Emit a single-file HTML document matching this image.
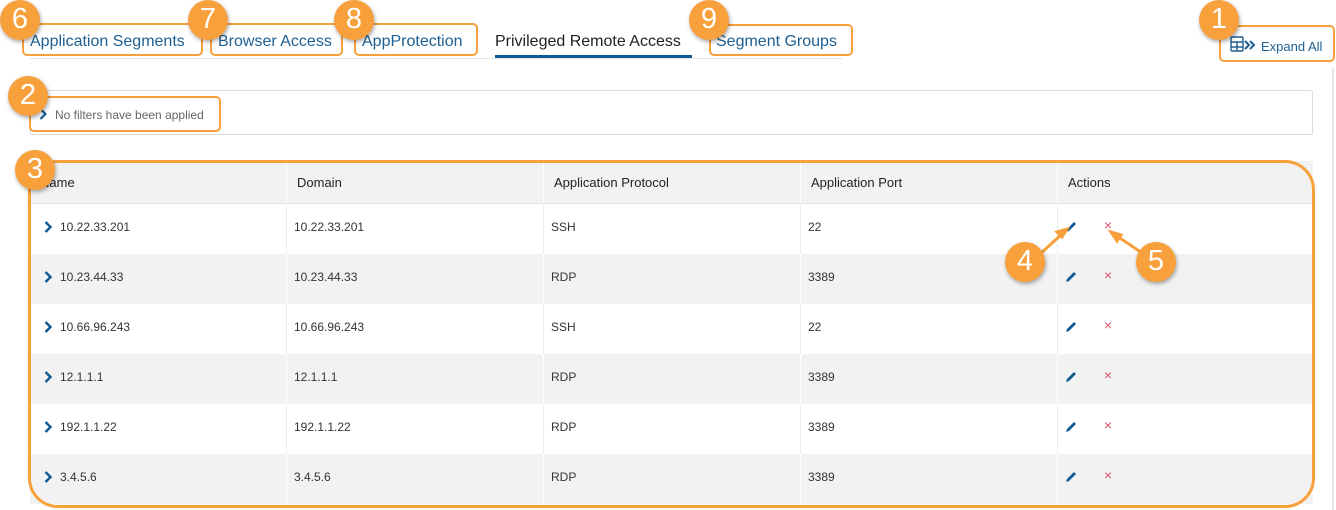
<!DOCTYPE html>
<html><head><style>
*{box-sizing:border-box;margin:0;padding:0}
body{width:1336px;height:510px;background:#fff;font-family:"Liberation Sans",sans-serif;position:relative;overflow:hidden}
.a{position:absolute}
.tab{position:absolute;top:33px;font-size:16px;color:#1d5f92;white-space:nowrap}
.ob{position:absolute;border:2.5px solid #f7a03c;border-radius:5px}
.c{position:absolute;width:40px;height:40px;border-radius:50%;background:#f7a03c;color:#fff;font-size:29px;text-align:center;line-height:39px;box-shadow:1px 2px 4px rgba(0,0,0,.35);z-index:5}
.row{position:absolute;left:30px;width:1283px;height:50px;font-size:12px;color:#333}
.cell{position:absolute;top:0;height:100%;line-height:46px}
.g{background:#f2f2f2}
.sep{position:absolute;top:0;width:1px;height:100%;background:#fff}
.row:not(.g):not(.hd) .sep{background:#ececec}
</style></head><body>
<div class="a" style="left:30px;top:58px;width:812px;height:1px;background:#e2e2e2"></div>
<div class="a" style="left:1332px;top:68px;width:2px;height:442px;background:#e6e6e6"></div>
<div class="tab" style="left:30px">Application Segments</div>
<div class="tab" style="left:218px">Browser Access</div>
<div class="tab" style="left:362px">AppProtection</div>
<div class="tab" style="left:495px;color:#222">Privileged Remote Access</div>
<div class="a" style="left:495px;top:55px;width:197px;height:3px;background:#0f5a93"></div>
<div class="tab" style="left:716px">Segment Groups</div>
<div class="ob" style="left:22px;top:23px;width:181px;height:33px"></div>
<div class="ob" style="left:210px;top:23px;width:133px;height:33px"></div>
<div class="ob" style="left:354px;top:23px;width:124px;height:33px"></div>
<div class="ob" style="left:709px;top:24px;width:144px;height:32px"></div>
<div class="ob" style="left:1219px;top:25px;width:116px;height:37px"></div>
<svg class="a" style="left:1230px;top:36px" width="28" height="18" viewBox="0 0 28 18" fill="none" stroke="#1d5f92" stroke-width="1.4"><rect x="1" y="1" width="12" height="14" rx="1"/><path d="M1 6h12M1 11h12M7 6v9"/><path d="M15 5l4 4-4 4M20 5l4 4-4 4" stroke-width="2"/></svg>
<div class="a" style="left:1261px;top:39px;font-size:13px;color:#1d5f92">Expand All</div>
<div class="a" style="left:30px;top:90px;width:1283px;height:45px;border:1px solid #ddd;border-radius:2px"></div>
<div class="ob" style="left:29px;top:96px;width:192px;height:36px"></div>
<svg class="a" style="left:39px;top:108px" width="8" height="12" viewBox="0 0 8 12"><path d="M1.5 1l5 5-5 5" fill="none" stroke="#0f5a93" stroke-width="2.2"/></svg>
<div class="a" style="left:55px;top:108px;font-size:12px;color:#666">No filters have been applied</div>
<div class="row hd g" style="top:161px;height:43px;background:#f2f2f2;border-bottom:1px solid #e2e2e2;font-size:13px;color:#222">
<div class="cell" style="left:10px;line-height:43px">Name</div><div class="sep" style="left:256px"></div>
<div class="cell" style="left:267px;line-height:43px">Domain</div><div class="sep" style="left:513px"></div>
<div class="cell" style="left:524px;line-height:43px">Application Protocol</div><div class="sep" style="left:770px"></div>
<div class="cell" style="left:781px;line-height:43px">Application Port</div><div class="sep" style="left:1027px"></div>
<div class="cell" style="left:1038px;line-height:43px">Actions</div></div>
<div id="rows"></div>
<script>
const d=[["10.22.33.201","SSH","22"],["10.23.44.33","RDP","3389"],["10.66.96.243","SSH","22"],["12.1.1.1","RDP","3389"],["192.1.1.22","RDP","3389"],["3.4.5.6","RDP","3389"]];
let h="";d.forEach((r,i)=>{h+=`<div class="row ${i%2?'g':''}" style="top:${204+i*50}px">
<svg class="a" style="left:14px;top:17px" width="8" height="12" viewBox="0 0 8 12"><path d="M1.5 1l5 5-5 5" fill="none" stroke="#0f5a93" stroke-width="2.4"/></svg>
<div class="cell" style="left:30px">${r[0]}</div><div class="sep" style="left:256px"></div>
<div class="cell" style="left:264px">${r[0]}</div><div class="sep" style="left:513px"></div>
<div class="cell" style="left:521px">${r[1]}</div><div class="sep" style="left:770px"></div>
<div class="cell" style="left:778px">${r[2]}</div><div class="sep" style="left:1027px"></div>
<svg class="a" style="left:1035px;top:16px" width="13" height="13" viewBox="0 0 13 13"><path d="M2 9l7-7 2 2-7 7-3 1z" fill="#0f5a93"/></svg>
<div class="a" style="left:1074px;top:13px;font-size:14px;color:#e0506a">×</div></div>`});
document.getElementById('rows').innerHTML=h;
</script>
<div class="a" style="left:28px;top:160px;width:1287px;height:348px;border:3px solid #f7a03c;border-radius:30px"></div>
<svg class="a" style="left:1030px;top:220px;z-index:4" width="140" height="40" viewBox="0 0 140 40"><g stroke="#f7a03c" stroke-width="3" fill="#f7a03c"><path d="M8 36L34 12"/><path d="M37 9l-10 3 5 5z"/><path d="M115 35L84 14"/><path d="M81 12l6 9 4-6z"/></g></svg>
<div class="c" style="left:0;top:0">6</div>
<div class="c" style="left:188px;top:0">7</div>
<div class="c" style="left:334px;top:0">8</div>
<div class="c" style="left:689px;top:0">9</div>
<div class="c" style="left:1199px;top:0">1</div>
<div class="c" style="left:8px;top:76px">2</div>
<div class="c" style="left:15px;top:150px">3</div>
<div class="c" style="left:1005px;top:242px">4</div>
<div class="c" style="left:1136px;top:242px">5</div>
</body></html>
